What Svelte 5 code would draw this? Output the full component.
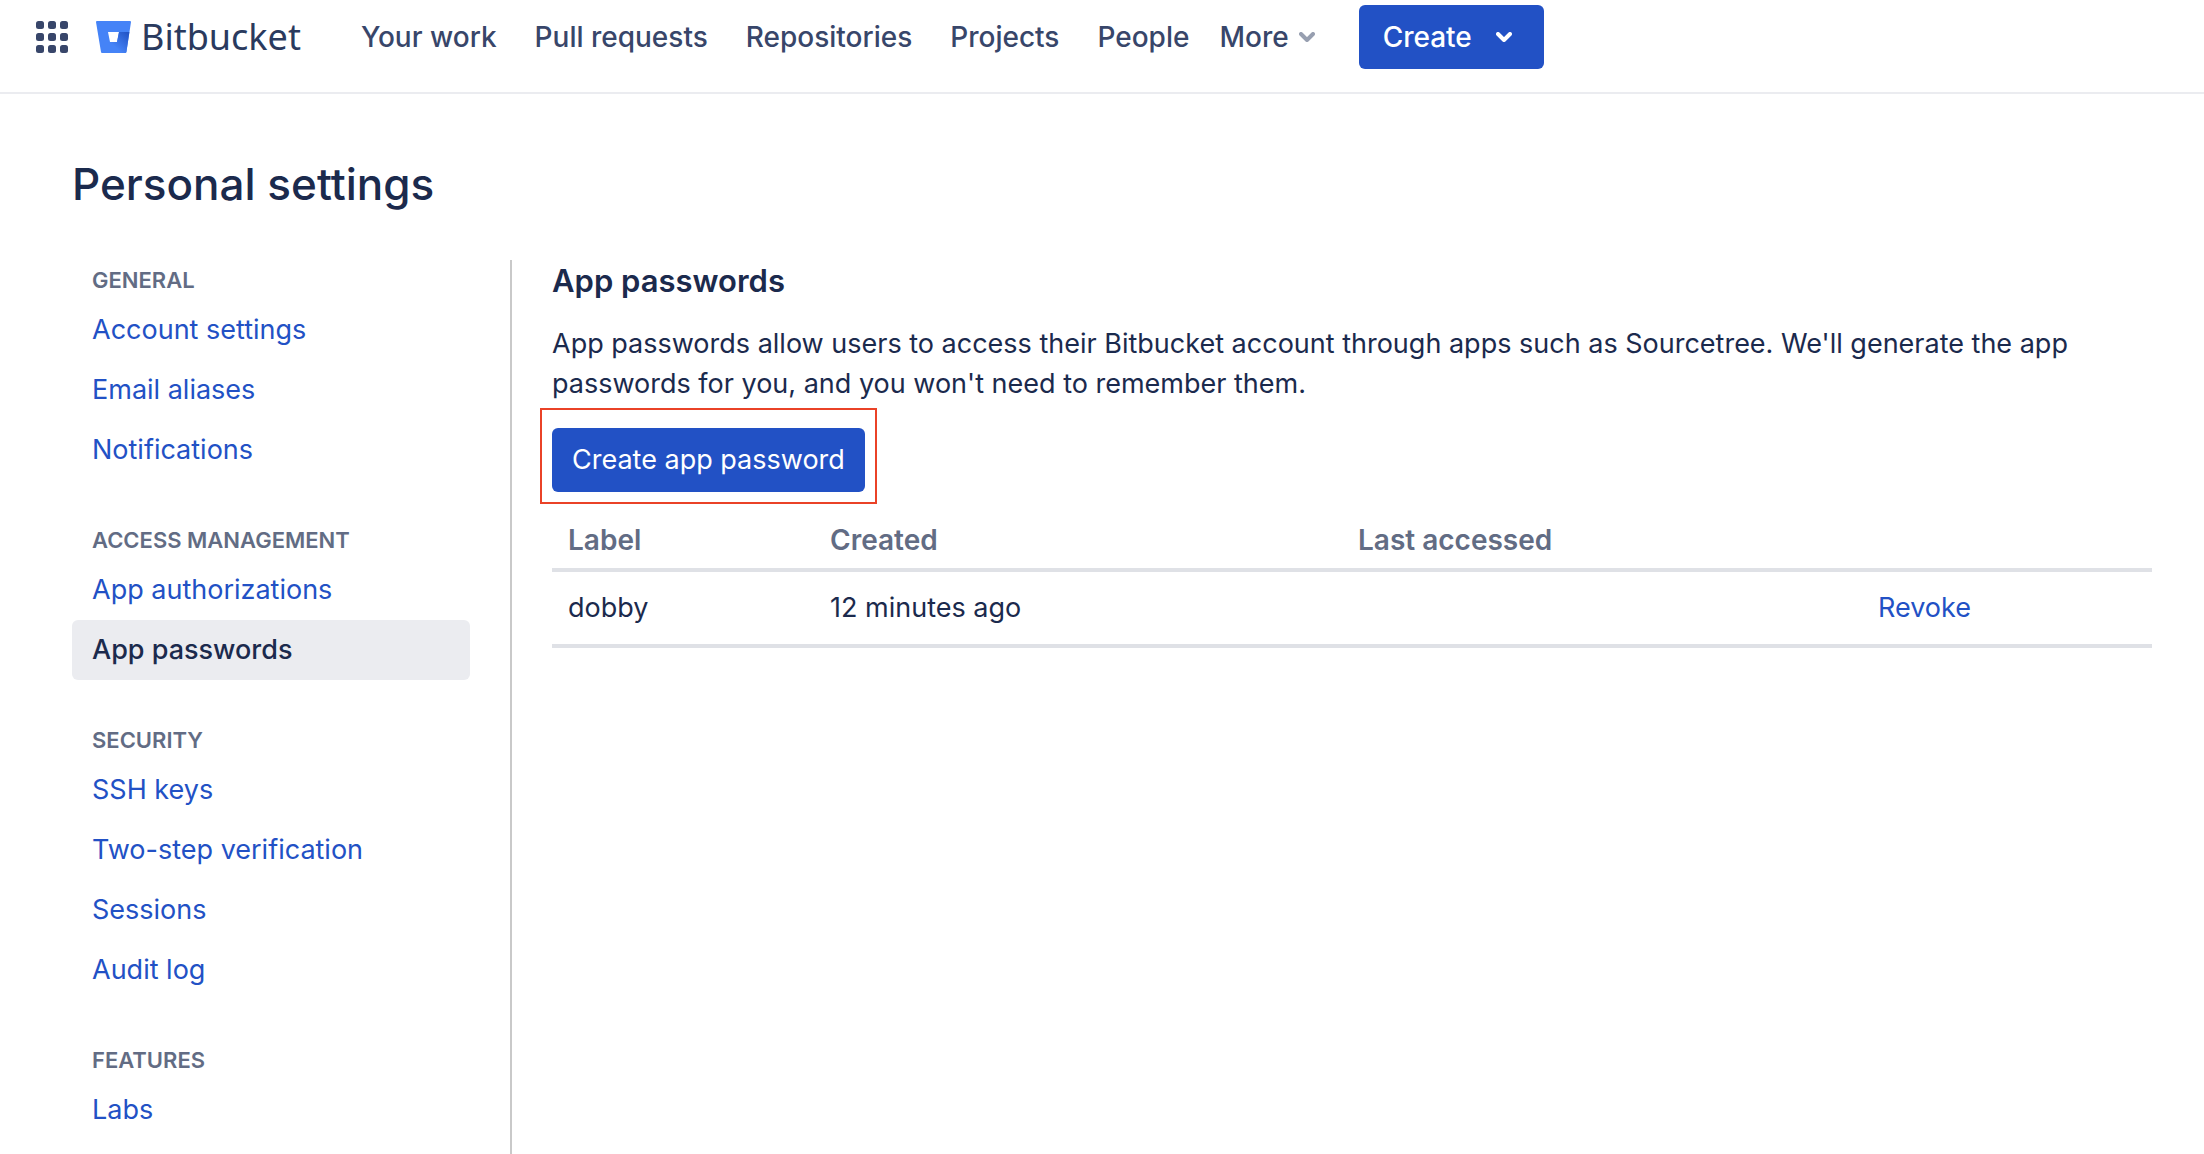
<script>
  const navLinks = ['Your work', 'Pull requests', 'Repositories', 'Projects', 'People'];

  const sections = [
    { title: 'General', items: ['Account settings', 'Email aliases', 'Notifications'] },
    { title: 'Access management', items: ['App authorizations', 'App passwords'] },
    { title: 'Security', items: ['SSH keys', 'Two-step verification', 'Sessions', 'Audit log'] },
    { title: 'Features', items: ['Labs'] },
  ];

  let selected = $state('App passwords');
  let passwords = $state([{ label: 'dobby', created: '12 minutes ago', accessed: '' }]);

  const select = (event, item) => {
    event.preventDefault();
    selected = item;
  };

  const revoke = (event, label) => {
    event.preventDefault();
    passwords = passwords.filter(p => p.label !== label);
  };
</script>

{#snippet chevron()}
  <svg class="chevron" width="16" height="10" viewBox="0 0 16 10" aria-hidden="true">
    <path d="M2 2 L8 8 L14 2" fill="none" stroke="currentColor" stroke-width="4" stroke-linecap="round" stroke-linejoin="round" />
  </svg>
{/snippet}

<header class="topbar">
  <button class="switcher" aria-label="Switch to">
    <svg width="32" height="32" viewBox="0 0 32 32">
      {#each [0, 12, 24] as y}
        {#each [0, 12, 24] as x}
          <rect {x} {y} width="8" height="8" rx="2.5" fill="currentColor" />
        {/each}
      {/each}
    </svg>
  </button>
  <a class="brand" href="#home">
    <svg width="35" height="32" viewBox="0 0 35 32" aria-hidden="true">
      <defs>
        <linearGradient id="bucket-shade" x1="32" y1="10" x2="18" y2="25" gradientUnits="userSpaceOnUse">
          <stop offset="0.1" stop-color="#2456c8" />
          <stop offset="1" stop-color="#4583f7" />
        </linearGradient>
      </defs>
      <path d="M1 0 H34 Q35 0 35 1 L30.4 31 Q30.2 32 29.2 32 H6.2 Q5.2 32 5 31 L0 1 Q0 0 1 0 Z M12 11 L14 21 H21 L23 11 Z" fill="#4583f7" fill-rule="evenodd" />
      <path d="M33.4 11 H23 L21 21 H14 L5.6 31.5 Q6 32 6.6 32 H29.2 Q30.2 32 30.4 31 Z" fill="url(#bucket-shade)" />
    </svg>
    <span>Bitbucket</span>
  </a>
  <nav class="nav" aria-label="Main">
    {#each navLinks as link}
      <a href="#{link}">{link}</a>
    {/each}
    <button class="more">More {@render chevron()}</button>
  </nav>
  <button class="primary create">Create {@render chevron()}</button>
</header>

<main>
  <h1>Personal settings</h1>
  <div class="columns">
    <nav class="sidebar" aria-label="Settings">
      {#each sections as section}
        <section>
          <h3>{section.title}</h3>
          <ul>
            {#each section.items as item}
              <li>
                <a href="#{item}" class:selected={item === selected} onclick={e => select(e, item)}>{item}</a>
              </li>
            {/each}
          </ul>
        </section>
      {/each}
    </nav>

    <div class="content">
      <h2>App passwords</h2>
      <p>
        App passwords allow users to access their Bitbucket account through apps such as Sourcetree. We'll generate the app
        passwords for you, and you won't need to remember them.
      </p>
      <div class="highlight">
        <button class="primary">Create app password</button>
      </div>
      <table>
        <colgroup>
          <col class="col-label" />
          <col class="col-created" />
          <col />
          <col class="col-actions" />
        </colgroup>
        <thead>
          <tr>
            <th>Label</th>
            <th>Created</th>
            <th>Last accessed</th>
            <th></th>
          </tr>
        </thead>
        <tbody>
          {#each passwords as password (password.label)}
            <tr>
              <td>{password.label}</td>
              <td>{password.created}</td>
              <td>{password.accessed}</td>
              <td><a href="#revoke" onclick={e => revoke(e, password.label)}>Revoke</a></td>
            </tr>
          {/each}
        </tbody>
      </table>
    </div>
  </div>
</main>

<style>
  :global(body) {
    margin: 0;
    background: #fff;
    color: #1b2a4d;
    font-family: Inter, "Liberation Sans", sans-serif;
    font-size: 27px;
    line-height: 40px;
  }

  a {
    color: #2251c5;
    text-decoration: none;
  }

  a:hover {
    text-decoration: underline;
  }

  button {
    padding: 0;
    border: none;
    background: none;
    color: inherit;
    font: inherit;
    cursor: pointer;
  }

  .topbar {
    display: flex;
    align-items: center;
    padding: 5px 36px 23px;
    border-bottom: 2px solid #ebecf0;
    color: #38466a;
    font-size: 28px;
    font-weight: 500;
  }

  .switcher {
    display: flex;
    margin-right: 28px;
  }

  .brand {
    display: flex;
    align-items: center;
    gap: 10px;
    margin-right: 52px;
    color: #2a3a5e;
    font-family: "Noto Sans", "Open Sans", sans-serif;
    font-size: 36px;
    font-weight: 400;
  }

  .nav {
    display: flex;
    align-items: center;
    gap: 22px;
  }

  .nav a {
    padding: 0 8px;
    color: inherit;
  }

  .more {
    display: flex;
    align-items: center;
    gap: 10px;
  }

  .more .chevron {
    color: #979fb0;
  }

  .primary {
    height: 64px;
    padding: 0 20px;
    border-radius: 6px;
    background: #2251c5;
    color: #fff;
  }

  .primary:hover {
    background: #2e63e0;
  }

  .create {
    display: flex;
    align-items: center;
    gap: 24px;
    margin-left: 44px;
    padding: 0 32px 0 24px;
  }

  main {
    padding: 60px 52px 0 72px;
  }

  h1 {
    margin: 0 0 46px;
    font-size: 44px;
    font-weight: 500;
    line-height: 60px;
  }

  .columns {
    display: flex;
  }

  .sidebar {
    flex: none;
    box-sizing: border-box;
    width: 440px;
    padding-right: 40px;
    border-right: 2px solid #c9c9c9;
  }

  .sidebar section {
    margin-bottom: 40px;
  }

  .sidebar h3 {
    margin: 0;
    padding: 0 20px;
    color: #626c84;
    font-size: 22px;
    font-weight: 600;
    text-transform: uppercase;
  }

  .sidebar ul {
    margin: 0;
    padding: 0;
    list-style: none;
  }

  .sidebar li a {
    display: block;
    padding: 10px 20px;
    border-radius: 6px;
  }

  .sidebar li a.selected {
    background: #ebecf0;
    color: #1b2a4d;
    font-weight: 500;
  }

  .content {
    flex: 1;
    min-width: 0;
    padding-left: 40px;
  }

  h2 {
    margin: 0 0 22px;
    font-size: 31px;
    font-weight: 600;
    line-height: 42px;
  }

  p {
    margin: 0 0 4px;
  }

  .highlight {
    display: inline-block;
    margin-left: -12px;
    padding: 18px 10px 10px;
    border: 2px solid #ea4227;
    vertical-align: top;
  }

  .highlight .primary {
    display: block;
  }

  table {
    width: 100%;
    border-collapse: collapse;
    table-layout: fixed;
  }

  .col-label {
    width: 262px;
  }

  .col-created {
    width: 33%;
  }

  .col-actions {
    width: 290px;
  }

  th,
  td {
    padding: 16px;
    border-bottom: 4px solid #dfe1e6;
    text-align: left;
  }

  th {
    padding: 16px 16px 8px;
    color: #626c84;
    font-size: 28px;
    font-weight: 600;
  }
</style>
